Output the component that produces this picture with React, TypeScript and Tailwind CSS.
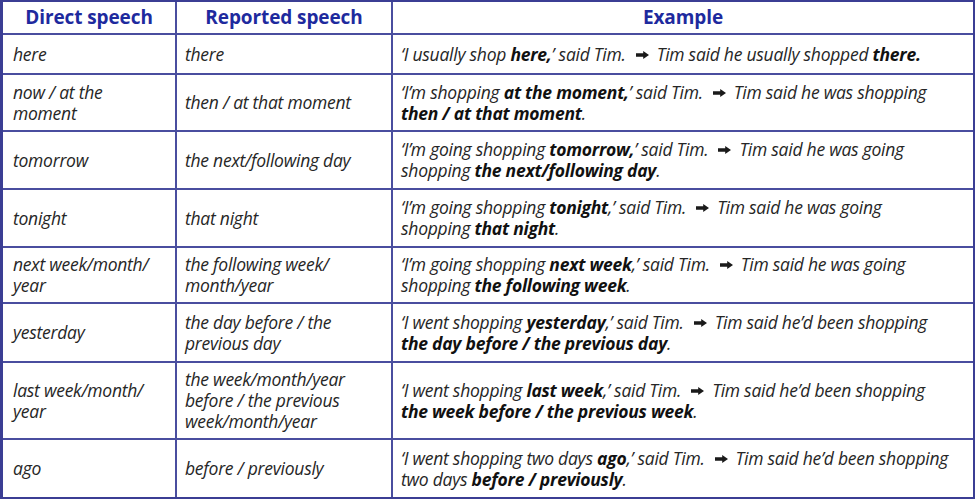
import React from "react";

const Arrow = () => (
  <svg
    width="13"
    height="8"
    viewBox="0 0 13 8"
    className="mr-[8px] ml-[10px] inline-block align-[2px]"
  >
    <path d="M0 2.3h7.2V0L13 4 7.2 8V5.7H0z" fill="#1a1a1a" />
  </svg>
);

type Row = {
  h: string;
  direct: React.ReactNode;
  reported: React.ReactNode;
  example: React.ReactNode;
};

const ROWS: Row[] = [
  {
    h: "h-[40px]",
    direct: "here",
    reported: "there",
    example: (
      <>
        ‘I usually shop <b>here,</b>’ said Tim.
        <Arrow />
        Tim said he usually shopped <b>there.</b>
      </>
    ),
  },
  {
    h: "h-[57px]",
    direct: (
      <>
        now / at the
        <br />
        moment
      </>
    ),
    reported: "then / at that moment",
    example: (
      <>
        ‘I’m shopping <b>at the moment,</b>’ said Tim.
        <Arrow />
        Tim said he was shopping
        <br />
        <b>then / at that moment</b>.
      </>
    ),
  },
  {
    h: "h-[58px]",
    direct: "tomorrow",
    reported: "the next/following day",
    example: (
      <>
        ‘I’m going shopping <b>tomorrow,</b>’ said Tim.
        <Arrow />
        Tim said he was going
        <br />
        shopping <b>the next/following day</b>.
      </>
    ),
  },
  {
    h: "h-[58px]",
    direct: "tonight",
    reported: "that night",
    example: (
      <>
        ‘I’m going shopping <b>tonight</b>,’ said Tim.
        <Arrow />
        Tim said he was going
        <br />
        shopping <b>that night</b>.
      </>
    ),
  },
  {
    h: "h-[56px]",
    direct: (
      <>
        next week/month/
        <br />
        year
      </>
    ),
    reported: (
      <>
        the following week/
        <br />
        month/year
      </>
    ),
    example: (
      <>
        ‘I’m going shopping <b>next week</b>,’ said Tim.
        <Arrow />
        Tim said he was going
        <br />
        shopping <b>the following week</b>.
      </>
    ),
  },
  {
    h: "h-[59px]",
    direct: "yesterday",
    reported: (
      <>
        the day before / the
        <br />
        previous day
      </>
    ),
    example: (
      <>
        ‘I went shopping <b>yesterday</b>,’ said Tim.
        <Arrow />
        Tim said he’d been shopping
        <br />
        <b>the day before / the previous day</b>.
      </>
    ),
  },
  {
    h: "h-[77px]",
    direct: (
      <>
        last week/month/
        <br />
        year
      </>
    ),
    reported: (
      <>
        the week/month/year
        <br />
        before / the previous
        <br />
        week/month/year
      </>
    ),
    example: (
      <>
        ‘I went shopping <b>last week</b>,’ said Tim.
        <Arrow />
        Tim said he’d been shopping
        <br />
        <b>the week before / the previous week</b>.
      </>
    ),
  },
  {
    h: "h-[57px]",
    direct: "ago",
    reported: "before / previously",
    example: (
      <>
        ‘I went shopping two days <b>ago</b>,’ said Tim.
        <Arrow />
        Tim said he’d been shopping
        <br />
        two days <b>before / previously</b>.
      </>
    ),
  },
];

export default function App() {
  return (
    <div className="h-[500px] w-[976px] bg-white">
      <div className="w-[975px] border-t-2 border-r-2 border-b-2 border-l-[3px] border-[#3b3e94] font-['Open_Sans',sans-serif] text-[17.5px] leading-[21px] tracking-[-0.25px] text-[#262626] italic">
        {/* header */}
        <div className="grid h-[33px] grid-cols-[174px_216px_1fr] border-b-2 border-[#4a4e9f] text-[19px] font-bold tracking-[-0.1px] text-[#1e2a9e] not-italic">
          <div className="flex items-center justify-center border-r-2 border-[#4a4e9f]">
            Direct speech
          </div>
          <div className="flex items-center justify-center border-r-2 border-[#4a4e9f]">
            Reported speech
          </div>
          <div className="flex items-center justify-center">Example</div>
        </div>

        {ROWS.map((row, i) => (
          <div
            key={i}
            className={`grid grid-cols-[174px_216px_1fr] ${row.h} ${
              i < ROWS.length - 1 ? "border-b-2 border-[#4a4e9f]" : ""
            }`}
          >
            <div className="flex items-center border-r-2 border-[#4a4e9f] pl-[10px]">
              <span>{row.direct}</span>
            </div>
            <div className="flex items-center border-r-2 border-[#4a4e9f] pl-[8px]">
              <span>{row.reported}</span>
            </div>
            <div className="flex items-center pl-[8px] [&_b]:font-bold [&_b]:text-[#111]">
              <span>{row.example}</span>
            </div>
          </div>
        ))}
      </div>
    </div>
  );
}
